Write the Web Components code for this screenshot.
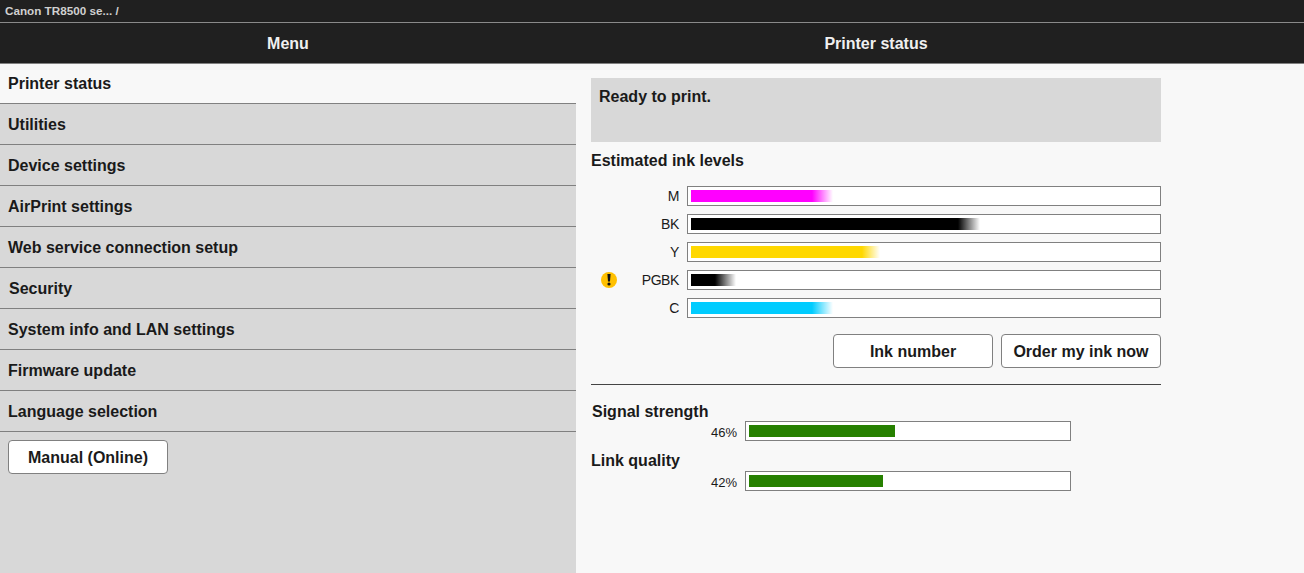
<!DOCTYPE html>
<html>
<head>
<meta charset="utf-8">
<title>Printer status</title>
<style>
    html, body { margin: 0; height: 100%; }
    body { font-family: "Liberation Sans", Arial, sans-serif; color: #1a1a1a; background: #f8f8f8; overflow: hidden; }
</style>
</head>
<body>
<printer-app>
    <span slot="crumb">Canon TR8500 se... /</span>
    <side-menu slot="menu">
        <menu-row active>Printer status</menu-row>
        <menu-row>Utilities</menu-row>
        <menu-row>Device settings</menu-row>
        <menu-row>AirPrint settings</menu-row>
        <menu-row>Web service connection setup</menu-row>
        <menu-row nudge>Security</menu-row>
        <menu-row>System info and LAN settings</menu-row>
        <menu-row>Firmware update</menu-row>
        <menu-row>Language selection</menu-row>
        <round-button slot="foot">Manual (Online)</round-button>
    </side-menu>
    <status-panel slot="main">
        <ink-row label="M" color="#ff00ff" solid="121" fade="21"></ink-row>
        <ink-row label="BK" color="#000000" solid="267" fade="22"></ink-row>
        <ink-row label="Y" color="#ffd800" solid="171" fade="18"></ink-row>
        <ink-row label="PGBK" color="#000000" solid="24" fade="21" warn></ink-row>
        <ink-row label="C" color="#00ccff" solid="121" fade="21"></ink-row>
        <round-button slot="actions">Ink number</round-button>
        <round-button slot="actions">Order my ink now</round-button>
        <signal-row slot="signal" label="Signal strength" value="46" fill="146"></signal-row>
        <signal-row slot="signal" label="Link quality" value="42" fill="134" tight></signal-row>
    </status-panel>
</printer-app>

<template id="app-tpl">
    <style>
        :host { display: flex; flex-direction: column; height: 573px; }
        .crumb { height: 22px; background: #202020; border-bottom: 1px solid #8a8a8a; color: #d0d0d0;
            font-size: 11.7px; font-weight: bold; line-height: 21px; padding-left: 5px; flex: none; }
        .heads { display: grid; grid-template-columns: 576px 600px; height: 40px; background: #202020; color: #f0f0f0;
            border-bottom: 1px solid #808080; font-size: 16px; font-weight: bold; line-height: 41px; text-align: center; flex: none; }
        .body { display: grid; grid-template-columns: 576px 1fr; flex: 1; min-height: 0; }
    </style>
    <div class="crumb"><slot name="crumb"></slot></div>
    <div class="heads"><div>Menu</div><div>Printer status</div></div>
    <div class="body"><slot name="menu"></slot><slot name="main"></slot></div>
</template>

<template id="menu-tpl">
    <style>
        :host { display: block; background: #d8d8d8; }
        .foot { padding: 8px; display: flex; }
    </style>
    <slot></slot>
    <div class="foot"><slot name="foot"></slot></div>
</template>

<template id="row-tpl">
    <style>
        :host { display: block; height: 40px; border-bottom: 1px solid #808080; padding-left: 8px;
            font-size: 16px; font-weight: bold; line-height: 41px; color: #1a1a1a; }
        :host([active]) { height: 39px; line-height: 39px; background: #f8f8f8; }
        :host([nudge]) { padding-left: 9px; }
    </style>
    <slot></slot>
</template>

<template id="button-tpl">
    <style>
        :host { display: block; box-sizing: border-box; width: 160px; height: 34px; background: #fff; border: 1px solid #808080;
            border-radius: 4px; font-size: 16px; font-weight: bold; line-height: 33px; text-align: center; color: #1a1a1a; }
    </style>
    <slot></slot>
</template>

<template id="panel-tpl">
    <style>
        :host { display: block; padding: 14px 0 0 15px; background: #f8f8f8; }
        .wrap { width: 570px; }
        .status { box-sizing: border-box; height: 64px; background: #d8d8d8; padding: 10px 8px; font-size: 16px; font-weight: bold; line-height: 18px; }
        h2 { margin: 0; font-size: 16px; font-weight: bold; line-height: 18px; padding-top: 10px; }
        .inks { display: flex; flex-direction: column; gap: 8px; margin-top: 16px; }
        .actions { display: flex; justify-content: flex-end; gap: 8px; margin-top: 16px; }
        hr { border: 0; border-top: 1px solid #444; margin: 16px 0 0; }
        .signal { margin-top: 18px; }
    </style>
    <div class="wrap">
        <div class="status">Ready to print.</div>
        <h2>Estimated ink levels</h2>
        <div class="inks"><slot></slot></div>
        <div class="actions"><slot name="actions"></slot></div>
        <hr>
        <div class="signal"><slot name="signal"></slot></div>
    </div>
</template>

<template id="ink-tpl">
    <style>
        :host { display: grid; grid-template-columns: 36px 52px 474px; column-gap: 4px; height: 20px; align-items: center; font-size: 14px; letter-spacing: -0.4px; color: #1a1a1a; }
        .warn { padding-left: 10px; height: 16px; }
        .warn svg { display: block; }
        .label { text-align: right; line-height: 20px; margin-right: 4px; }
        .box { box-sizing: border-box; height: 20px; background: #fff; border: 1px solid #808080; padding: 3px; }
        .fill { height: 12px; }
    </style>
    <div class="warn"></div>
    <div class="label"></div>
    <div class="box"><div class="fill"></div></div>
</template>

<template id="signal-tpl">
    <style>
        :host { display: block; }
        .title { font-size: 16px; font-weight: bold; line-height: 18px; }
        .line { display: flex; align-items: center; height: 20px; }
        .val { box-sizing: border-box; width: 146px; text-align: right; font-size: 13px; padding-top: 2px; color: #1a1a1a; }
        .box { box-sizing: border-box; width: 326px; height: 20px; margin-left: 8px; background: #fff; border: 1px solid #808080; padding: 3px; }
        .fill { height: 12px; background: #268000; }
    </style>
    <div class="title"></div>
    <div class="line"><span class="val"></span><div class="box"><div class="fill"></div></div></div>
</template>

<script>
function stamp(el, id) {
    const root = el.attachShadow({ mode: 'open' });
    root.appendChild(document.getElementById(id).content.cloneNode(true));
    return root;
}

class PrinterApp extends HTMLElement {
    constructor() { super(); stamp(this, 'app-tpl'); }
}
class SideMenu extends HTMLElement {
    constructor() { super(); stamp(this, 'menu-tpl'); }
}
class MenuRow extends HTMLElement {
    constructor() { super(); stamp(this, 'row-tpl'); }
}
class RoundButton extends HTMLElement {
    constructor() { super(); stamp(this, 'button-tpl'); }
}
class StatusPanel extends HTMLElement {
    constructor() { super(); stamp(this, 'panel-tpl'); }
}

class InkRow extends HTMLElement {
    constructor() {
        super();
        this._root = stamp(this, 'ink-tpl');
    }

    connectedCallback() {
        const color = this.getAttribute('color');
        const solid = Number(this.getAttribute('solid'));
        const fade = Number(this.getAttribute('fade'));
        this._root.querySelector('.label').textContent = this.getAttribute('label');

        // bar ends in a short fade to transparent
        const fill = this._root.querySelector('.fill');
        fill.style.width = (solid + fade) + 'px';
        fill.style.background = `linear-gradient(to right, ${color} ${solid}px, ${color}00 100%)`;

        if (this.hasAttribute('warn')) {
            this._root.querySelector('.warn').innerHTML = `
                <svg width="16" height="16" viewBox="0 0 16 16">
                    <circle cx="8" cy="8" r="8" fill="#ffc000"/>
                    <path d="M6.4 2h3.2l-.6 7.6H7z" fill="#111"/>
                    <circle cx="8" cy="12" r="1.6" fill="#111"/>
                </svg>`;
        }
    }
}

class SignalRow extends HTMLElement {
    constructor() {
        super();
        this._root = stamp(this, 'signal-tpl');
    }

    connectedCallback() {
        const tight = this.hasAttribute('tight');
        this._root.querySelector('.title').textContent = this.getAttribute('label');
        this._root.querySelector('.val').textContent = this.getAttribute('value') + '%';
        this._root.querySelector('.fill').style.width = this.getAttribute('fill') + 'px';
        this.style.marginTop = tight ? '11px' : '0';
        this.style.paddingLeft = tight ? '0' : '1px';
        if (tight) {
            this._root.querySelector('.line').style.marginTop = '1px';
        } else {
            this._root.querySelector('.val').style.width = '145px';
        }
    }
}

customElements.define('printer-app', PrinterApp);
customElements.define('side-menu', SideMenu);
customElements.define('menu-row', MenuRow);
customElements.define('round-button', RoundButton);
customElements.define('status-panel', StatusPanel);
customElements.define('ink-row', InkRow);
customElements.define('signal-row', SignalRow);
</script>
</body>
</html>
